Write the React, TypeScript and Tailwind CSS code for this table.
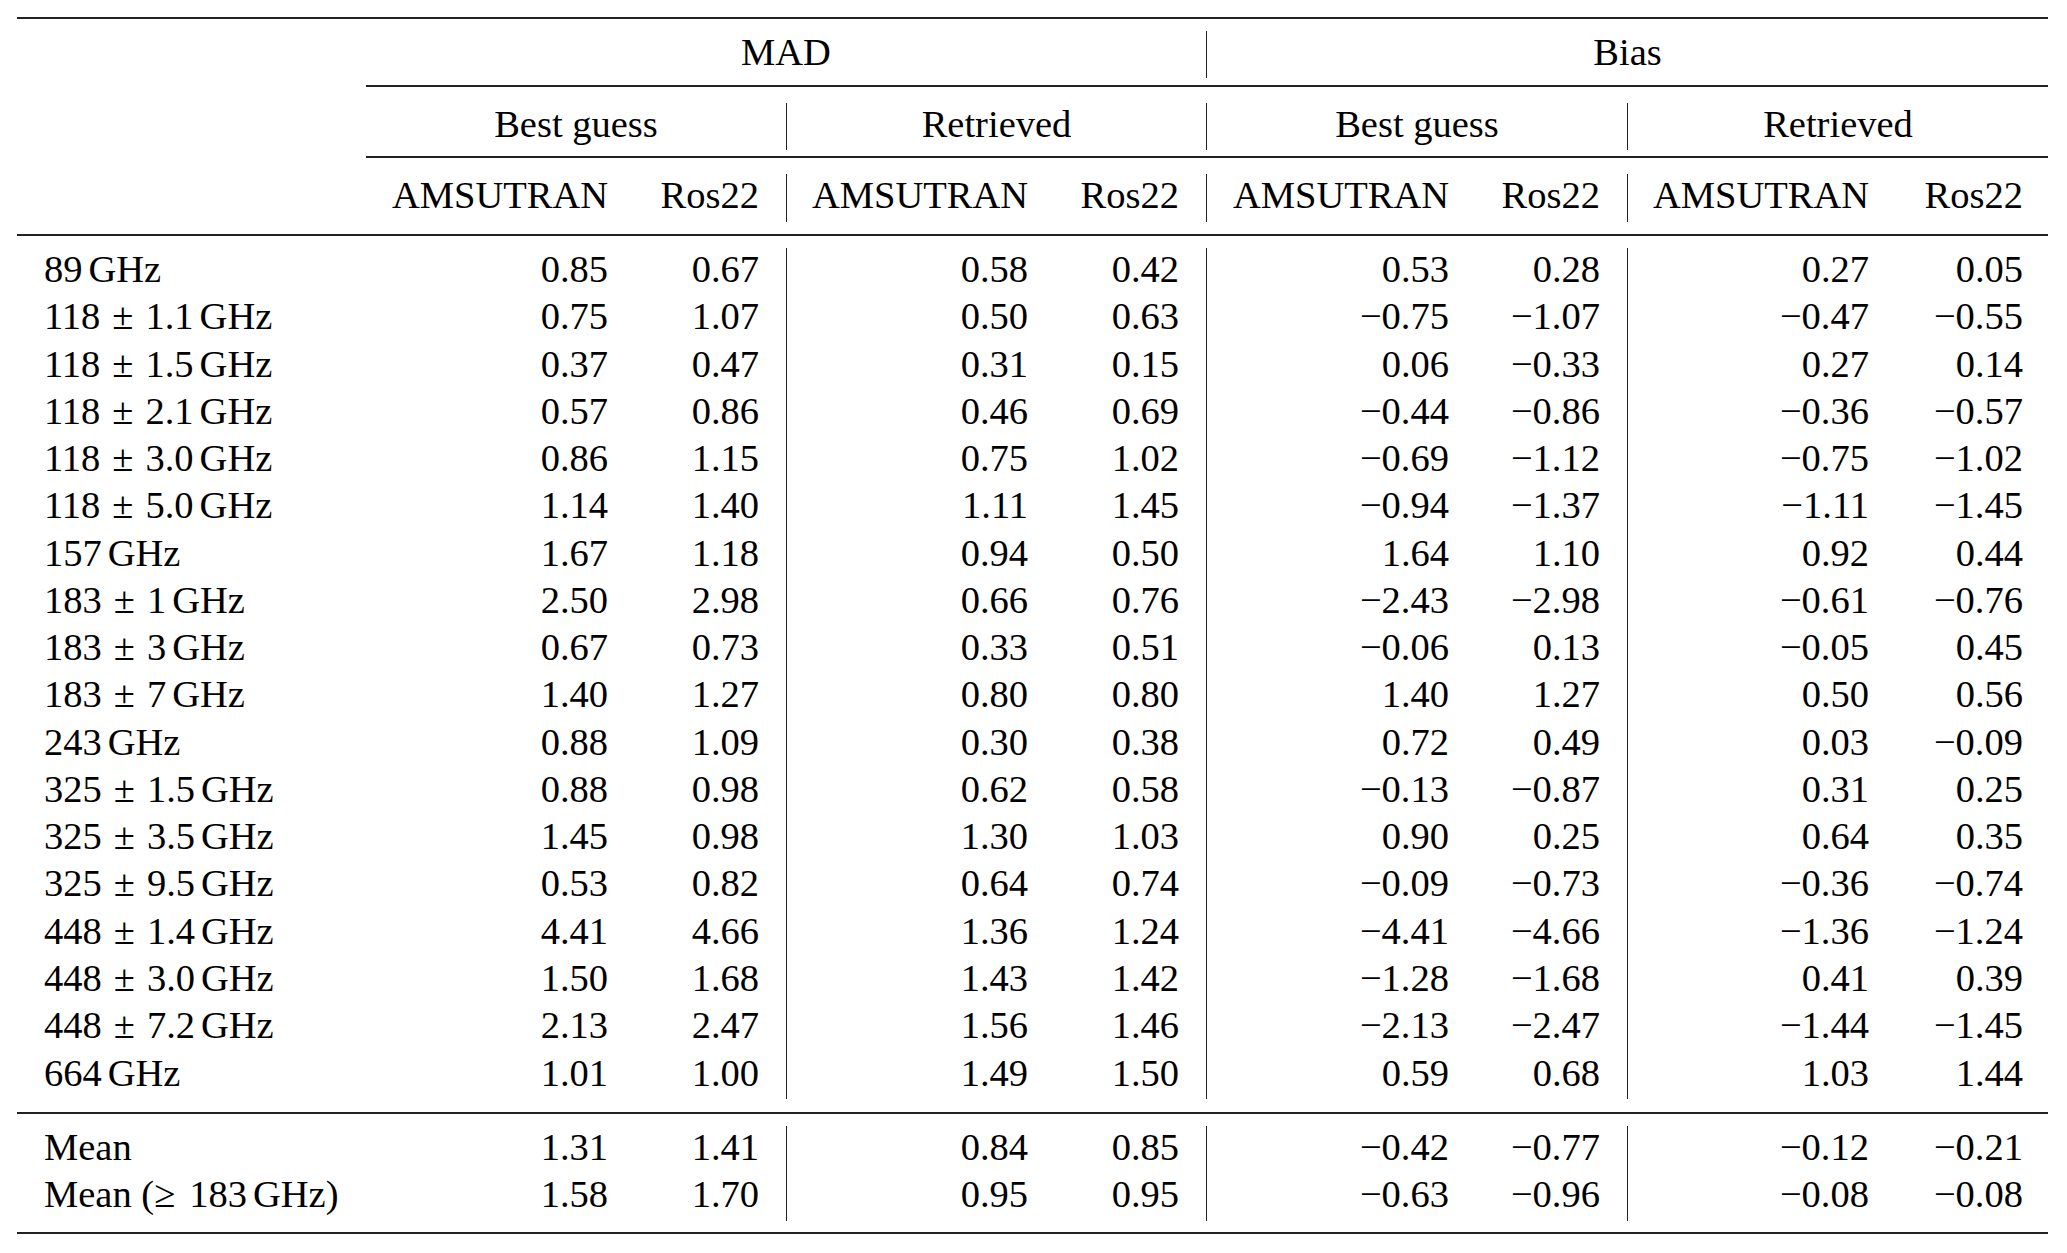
const rows: [string, string | null, string[]][] = [
  ["89", null, ["0.85", "0.67", "0.58", "0.42", "0.53", "0.28", "0.27", "0.05"]],
  ["118", "1.1", ["0.75", "1.07", "0.50", "0.63", "−0.75", "−1.07", "−0.47", "−0.55"]],
  ["118", "1.5", ["0.37", "0.47", "0.31", "0.15", "0.06", "−0.33", "0.27", "0.14"]],
  ["118", "2.1", ["0.57", "0.86", "0.46", "0.69", "−0.44", "−0.86", "−0.36", "−0.57"]],
  ["118", "3.0", ["0.86", "1.15", "0.75", "1.02", "−0.69", "−1.12", "−0.75", "−1.02"]],
  ["118", "5.0", ["1.14", "1.40", "1.11", "1.45", "−0.94", "−1.37", "−1.11", "−1.45"]],
  ["157", null, ["1.67", "1.18", "0.94", "0.50", "1.64", "1.10", "0.92", "0.44"]],
  ["183", "1", ["2.50", "2.98", "0.66", "0.76", "−2.43", "−2.98", "−0.61", "−0.76"]],
  ["183", "3", ["0.67", "0.73", "0.33", "0.51", "−0.06", "0.13", "−0.05", "0.45"]],
  ["183", "7", ["1.40", "1.27", "0.80", "0.80", "1.40", "1.27", "0.50", "0.56"]],
  ["243", null, ["0.88", "1.09", "0.30", "0.38", "0.72", "0.49", "0.03", "−0.09"]],
  ["325", "1.5", ["0.88", "0.98", "0.62", "0.58", "−0.13", "−0.87", "0.31", "0.25"]],
  ["325", "3.5", ["1.45", "0.98", "1.30", "1.03", "0.90", "0.25", "0.64", "0.35"]],
  ["325", "9.5", ["0.53", "0.82", "0.64", "0.74", "−0.09", "−0.73", "−0.36", "−0.74"]],
  ["448", "1.4", ["4.41", "4.66", "1.36", "1.24", "−4.41", "−4.66", "−1.36", "−1.24"]],
  ["448", "3.0", ["1.50", "1.68", "1.43", "1.42", "−1.28", "−1.68", "0.41", "0.39"]],
  ["448", "7.2", ["2.13", "2.47", "1.56", "1.46", "−2.13", "−2.47", "−1.44", "−1.45"]],
  ["664", null, ["1.01", "1.00", "1.49", "1.50", "0.59", "0.68", "1.03", "1.44"]],
];

const meanAll = ["1.31", "1.41", "0.84", "0.85", "−0.42", "−0.77", "−0.12", "−0.21"];
const meanHigh = ["1.58", "1.70", "0.95", "0.95", "−0.63", "−0.96", "−0.08", "−0.08"];

// cell classes: AMSUTRAN columns, Ros22 columns (with the group separator), last Ros22
const aCell = "p-0 pt-[2px] pr-[26px] align-top text-right";
const rCell = "p-0 pt-[2px] pr-[27px] align-top text-right border-r border-[#222]";
const rLast = "p-0 pt-[2px] pr-[25px] align-top text-right";

function Freq({ center, off }: { center: string; off: string | null }) {
  return (
    <>
      {center}
      {off && (
        <>
          <span className="mx-[12px]">±</span>
          {off}
        </>
      )}
      <span className="ml-[6px]">GHz</span>
    </>
  );
}

function Values({ vals }: { vals: string[] }) {
  return (
    <>
      {vals.map((v, i) => (
        <td key={i} className={i % 2 === 0 ? aCell : i === 7 ? rLast : rCell}>
          {v}
        </td>
      ))}
    </>
  );
}

export default function App() {
  return (
    <div className="min-h-screen bg-white pl-[17px] pt-[17px] text-black">
      <table className="table-fixed w-[2031px] border-separate border-spacing-0 font-['Liberation_Serif','Times_New_Roman',serif] text-[38.5px] leading-none">
        <colgroup>
          <col className="w-[349px]" />
          <col className="w-[268px]" />
          <col className="w-[153px]" />
          <col className="w-[267px]" />
          <col className="w-[153px]" />
          <col className="w-[268px]" />
          <col className="w-[153px]" />
          <col className="w-[267px]" />
          <col className="w-[153px]" />
        </colgroup>
        <tbody>
          {/* top rule */}
          <tr>
            <td colSpan={9} className="p-0 h-[2px] bg-[#222]" />
          </tr>
          <tr>
            <td colSpan={9} className="p-0 h-[12px]" />
          </tr>

          {/* MAD / Bias */}
          <tr className="h-[47px]">
            <td className="p-0" />
            <td colSpan={4} className="p-0 pt-[2px] align-top text-center border-r border-[#222]">
              MAD
            </td>
            <td colSpan={4} className="p-0 pt-[2px] align-top text-center">
              Bias
            </td>
          </tr>
          <tr>
            <td colSpan={9} className="p-0 h-[7px]" />
          </tr>
          <tr>
            <td className="p-0" />
            <td colSpan={8} className="p-0 h-[2px] bg-[#222]" />
          </tr>
          <tr>
            <td colSpan={9} className="p-0 h-[16px]" />
          </tr>

          {/* Best guess / Retrieved */}
          <tr className="h-[47px]">
            <td className="p-0" />
            <td colSpan={2} className="p-0 pt-[2px] align-top text-center border-r border-[#222]">
              Best guess
            </td>
            <td colSpan={2} className="p-0 pt-[2px] align-top text-center border-r border-[#222]">
              Retrieved
            </td>
            <td colSpan={2} className="p-0 pt-[2px] align-top text-center border-r border-[#222]">
              Best guess
            </td>
            <td colSpan={2} className="p-0 pt-[2px] align-top text-center">
              Retrieved
            </td>
          </tr>
          <tr>
            <td colSpan={9} className="p-0 h-[6px]" />
          </tr>
          <tr>
            <td className="p-0" />
            <td colSpan={8} className="p-0 h-[2px] bg-[#222]" />
          </tr>
          <tr>
            <td colSpan={9} className="p-0 h-[16px]" />
          </tr>

          {/* model names */}
          <tr className="h-[48px]">
            <td className="p-0" />
            <Values vals={["AMSUTRAN", "Ros22", "AMSUTRAN", "Ros22", "AMSUTRAN", "Ros22", "AMSUTRAN", "Ros22"]} />
          </tr>
          <tr>
            <td colSpan={9} className="p-0 h-[12px]" />
          </tr>
          <tr>
            <td colSpan={9} className="p-0 h-[2px] bg-[#222]" />
          </tr>
          <tr>
            <td colSpan={9} className="p-0 h-[12px]" />
          </tr>

          {/* channels */}
          {rows.map(([center, off, vals], i) => (
            <tr key={i} className="h-[47.28px]">
              <td className="p-0 pt-[2px] pl-[27px] align-top text-left whitespace-nowrap">
                <Freq center={center} off={off} />
              </td>
              <Values vals={vals} />
            </tr>
          ))}

          <tr>
            <td colSpan={9} className="p-0 h-[13px]" />
          </tr>
          <tr>
            <td colSpan={9} className="p-0 h-[2px] bg-[#222]" />
          </tr>
          <tr>
            <td colSpan={9} className="p-0 h-[12px]" />
          </tr>

          {/* means */}
          <tr className="h-[47.5px]">
            <td className="p-0 pt-[2px] pl-[27px] align-top text-left">Mean</td>
            <Values vals={meanAll} />
          </tr>
          <tr className="h-[47.5px]">
            <td className="p-0 pt-[2px] pl-[27px] align-top text-left whitespace-nowrap">
              Mean (≥<span className="ml-[14px]">183</span>
              <span className="ml-[6px]">GHz)</span>
            </td>
            <Values vals={meanHigh} />
          </tr>
          <tr>
            <td colSpan={9} className="p-0 h-[11px]" />
          </tr>
          <tr>
            <td colSpan={9} className="p-0 h-[2px] bg-[#222]" />
          </tr>
        </tbody>
      </table>
    </div>
  );
}
